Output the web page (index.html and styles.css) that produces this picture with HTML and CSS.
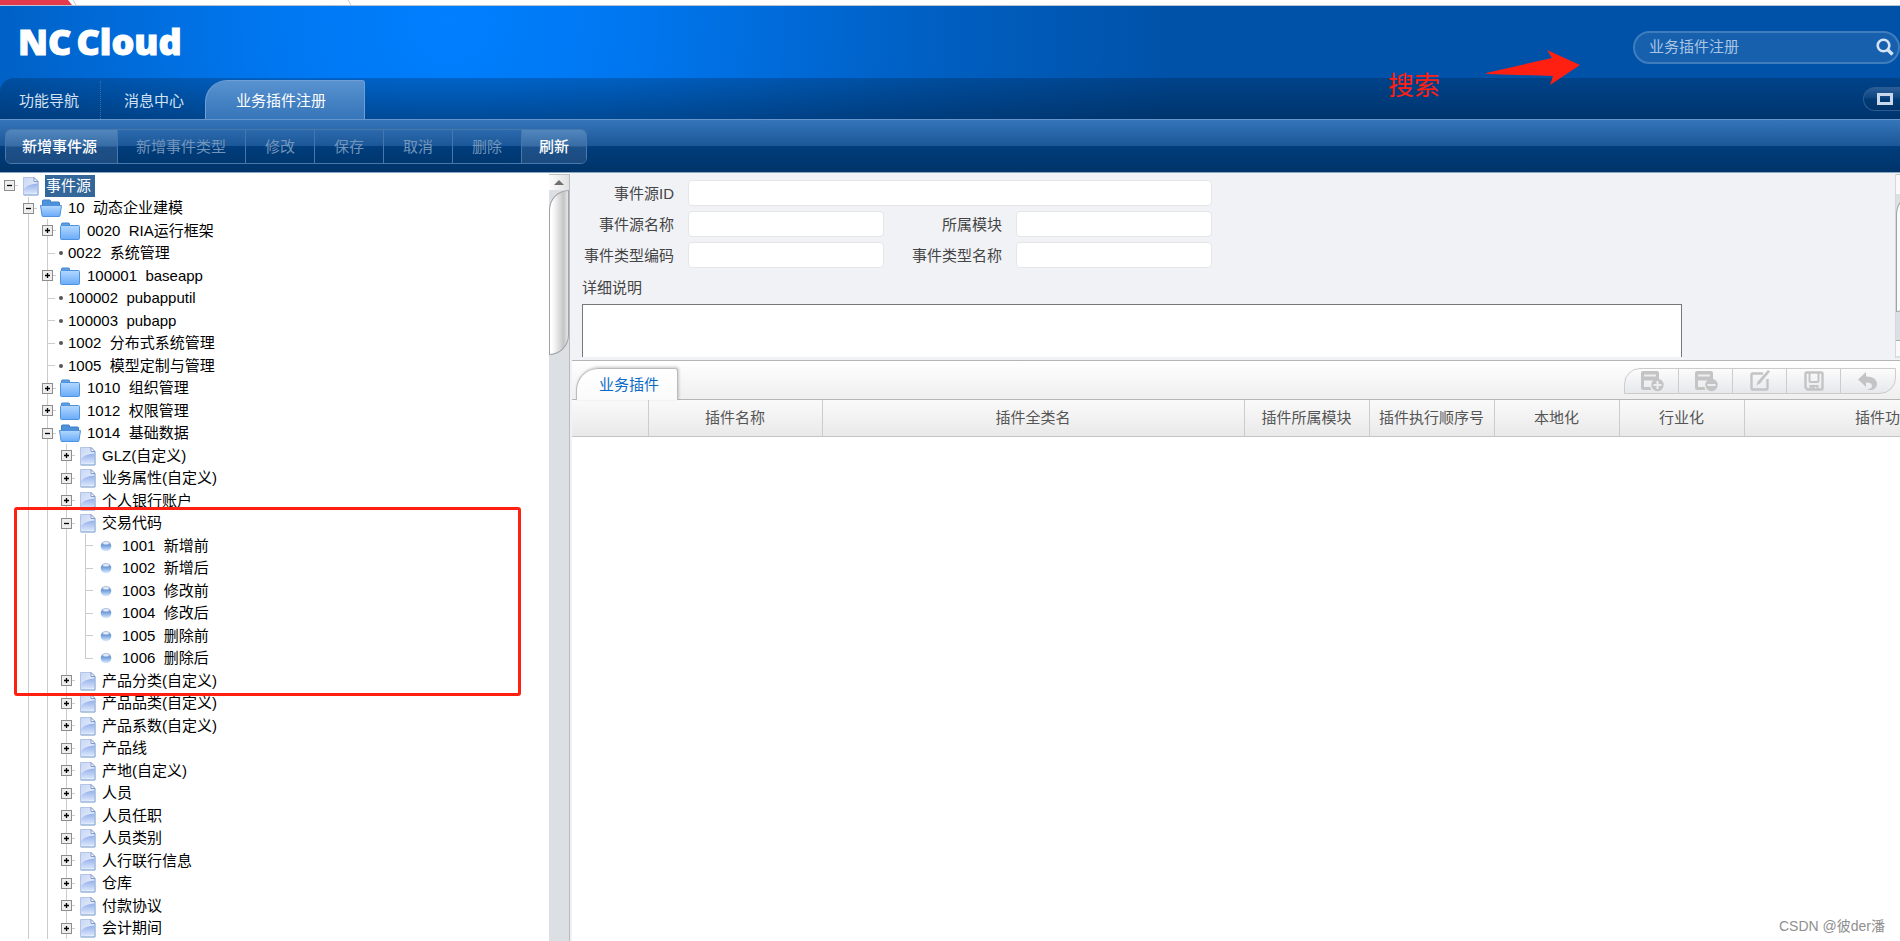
FILE: index.html
```html
<!DOCTYPE html>
<html lang="zh-CN">
<head>
    <meta charset="UTF-8">
    <meta name="viewport" content="width=device-width, initial-scale=1.0">
    <title>NC Cloud</title>
    <link rel="stylesheet" href="styles.css">
</head>
<body>
    <!-- icons -->
    <svg class="defs" aria-hidden="true">
        <defs>
            <linearGradient id="gFolder" x1="0" y1="0" x2="0" y2="1">
                <stop offset="0" stop-color="#b4d8ff"/>
                <stop offset="1" stop-color="#69abf8"/>
            </linearGradient>
            <linearGradient id="gPage" x1="0" y1="0" x2="1" y2="1">
                <stop offset="0" stop-color="#c9d7f5"/>
                <stop offset="1" stop-color="#eef3fd"/>
            </linearGradient>
            <linearGradient id="gWave" x1="0" y1="0" x2="0" y2="1">
                <stop offset="0" stop-color="#94b0ec"/>
                <stop offset="1" stop-color="#dce7fb"/>
            </linearGradient>
            <linearGradient id="gBall" x1="0" y1="0" x2="0" y2="1">
                <stop offset="0" stop-color="#c3d2e8"/>
                <stop offset=".4" stop-color="#6f98d4"/>
                <stop offset=".6" stop-color="#8db5e8"/>
                <stop offset="1" stop-color="#e0eefd"/>
            </linearGradient>
        </defs>
        <symbol id="plus" viewBox="0 0 19 19">
            <path d="M15 9.5h3" stroke="#ccc"/>
            <rect x="4.5" y="4.5" width="10" height="10" fill="#eee" stroke="#8c8c8c"/>
            <path d="M7 9.5h5M9.5 7v5" stroke="#000" stroke-width="1.3"/>
        </symbol>
        <symbol id="minus" viewBox="0 0 19 19">
            <path d="M15 9.5h3" stroke="#ccc"/>
            <rect x="4.5" y="4.5" width="10" height="10" fill="#eee" stroke="#8c8c8c"/>
            <path d="M7 9.5h5" stroke="#000" stroke-width="1.3"/>
        </symbol>
        <symbol id="page" viewBox="0 0 16 20">
            <path d="M.5 1.5H11l4 4V19H.5z" fill="url(#gPage)" stroke="#b3c4e6"/>
            <path d="M1 13c3-4 8-5 13.500-5.500V17L1 18z" fill="url(#gWave)"/>
            <path d="M11 1.500v4h4z" fill="#fff" stroke="#7f9cc8"/>
            <path d="M15 6v13H1" fill="none" stroke="#8fb0d4"/>
        </symbol>
        <symbol id="folder" viewBox="0 0 20 18">
            <path d="M1.500 4V2q0-1 1-1h6q1 0 1 1v2z" fill="#5e9fe6" stroke="#4384cd"/>
            <rect x=".5" y="3.500" width="19" height="14" rx="1" fill="url(#gFolder)" stroke="#4f93de"/>
        </symbol>
        <symbol id="folder-open" viewBox="0 0 22 18">
            <path d="M2.500 15V2q0-1 1-1h6q1 0 1 1v1h8q1 0 1 1v10z" fill="#4f92dc" stroke="#3d7ec6"/>
            <path d="M.5 6.500h21l-1.500 10q0 1-1 1h-16q-1 0-1-1z" fill="url(#gFolder)" stroke="#4f93de"/>
        </symbol>
        <symbol id="ball" viewBox="0 0 12 12">
            <circle cx="6" cy="6" r="5.300" fill="url(#gBall)"/>
            <ellipse cx="6" cy="3.200" rx="3" ry="1.300" fill="#e3ebf6"/>
        </symbol>
        <symbol id="list" viewBox="0 0 24 22">
            <path d="M3 1h14q2 0 2 2v7H1V3q0-2 2-2z"/>
            <path d="M1 9h18v2a7 7 0 0 0-3-.5H4v6.500h6.500q0 1.500 1 3H3q-2 0-2-2z"/>
            <path d="M4 4.500h12v2H4z" fill="#eceef1"/>
            <circle cx="17.500" cy="15" r="6.200"/>
        </symbol>
    </svg>

    <div class="browser-strip">
        <svg width="360" height="6" viewBox="0 0 360 6" aria-hidden="true">
            <path d="M0 0h68l4 5H0z" fill="#e5394c"/>
            <path d="M73 0l3 5M348 0l3 5" stroke="#ccc" fill="none"/>
        </svg>
    </div>

    <header class="top">
        <div class="brand-row">
            <h1 class="logo">NC<span>Cloud</span></h1>
            <form class="search">
                <input type="text" value="业务插件注册" aria-label="搜索">
                <button type="button" aria-label="搜索">
                    <svg width="18" height="18" viewBox="0 0 18 18">
                        <circle cx="7.500" cy="7.500" r="5.800" fill="none" stroke="#d5e4f4" stroke-width="2.600"/>
                        <path d="M11.500 11.500l5 5" stroke="#d5e4f4" stroke-width="3.400"/>
                    </svg>
                </button>
            </form>
        </div>
        <nav class="tabs">
            <a href="#">功能导航</a>
            <a href="#">消息中心</a>
            <a href="#" class="active">业务插件注册</a>
            <button type="button" class="restore" aria-label="还原">
                <svg width="16" height="12" viewBox="0 0 16 12"><rect x="1.500" y="1.500" width="13" height="9" fill="none" stroke="#c9d8ea" stroke-width="3"/></svg>
            </button>
        </nav>
    </header>

    <div class="toolbar">
        <div class="btn-group">
            <button type="button" class="on">新增事件源</button>
            <button type="button" disabled>新增事件类型</button>
            <button type="button" disabled>修改</button>
            <button type="button" disabled>保存</button>
            <button type="button" disabled>取消</button>
            <button type="button" disabled>删除</button>
            <button type="button" class="on">刷新</button>
        </div>
    </div>

    <div class="content">
        <aside class="side">
            <ul class="tree">
                <li class="lv0"><svg class="exp"><use href="#minus"/></svg><svg class="page"><use href="#page"/></svg><span class="selected">事件源</span></li>
                <li class="lv1"><svg class="exp"><use href="#minus"/></svg><svg class="folder open"><use href="#folder-open"/></svg>10  动态企业建模</li>
                <li class="lv2"><svg class="exp"><use href="#plus"/></svg><svg class="folder"><use href="#folder"/></svg>0020  RIA运行框架</li>
                <li class="lv2"><i class="branch"></i><i class="dot"></i>0022  系统管理</li>
                <li class="lv2"><svg class="exp"><use href="#plus"/></svg><svg class="folder"><use href="#folder"/></svg>100001  baseapp</li>
                <li class="lv2"><i class="branch"></i><i class="dot"></i>100002  pubapputil</li>
                <li class="lv2"><i class="branch"></i><i class="dot"></i>100003  pubapp</li>
                <li class="lv2"><i class="branch"></i><i class="dot"></i>1002  分布式系统管理</li>
                <li class="lv2"><i class="branch"></i><i class="dot"></i>1005  模型定制与管理</li>
                <li class="lv2"><svg class="exp"><use href="#plus"/></svg><svg class="folder"><use href="#folder"/></svg>1010  组织管理</li>
                <li class="lv2"><svg class="exp"><use href="#plus"/></svg><svg class="folder"><use href="#folder"/></svg>1012  权限管理</li>
                <li class="lv2"><svg class="exp"><use href="#minus"/></svg><svg class="folder open"><use href="#folder-open"/></svg>1014  基础数据</li>
                <li class="lv3"><svg class="exp"><use href="#plus"/></svg><svg class="page"><use href="#page"/></svg>GLZ(自定义)</li>
                <li class="lv3"><svg class="exp"><use href="#plus"/></svg><svg class="page"><use href="#page"/></svg>业务属性(自定义)</li>
                <li class="lv3"><svg class="exp"><use href="#plus"/></svg><svg class="page"><use href="#page"/></svg>个人银行账户</li>
                <li class="lv3"><svg class="exp"><use href="#minus"/></svg><svg class="page"><use href="#page"/></svg>交易代码</li>
                <li class="lv4"><i class="branch"></i><svg class="ball"><use href="#ball"/></svg>1001  新增前</li>
                <li class="lv4"><i class="branch"></i><svg class="ball"><use href="#ball"/></svg>1002  新增后</li>
                <li class="lv4"><i class="branch"></i><svg class="ball"><use href="#ball"/></svg>1003  修改前</li>
                <li class="lv4"><i class="branch"></i><svg class="ball"><use href="#ball"/></svg>1004  修改后</li>
                <li class="lv4"><i class="branch"></i><svg class="ball"><use href="#ball"/></svg>1005  删除前</li>
                <li class="lv4"><i class="branch last"></i><svg class="ball"><use href="#ball"/></svg>1006  删除后</li>
                <li class="lv3"><svg class="exp"><use href="#plus"/></svg><svg class="page"><use href="#page"/></svg>产品分类(自定义)</li>
                <li class="lv3"><svg class="exp"><use href="#plus"/></svg><svg class="page"><use href="#page"/></svg>产品品类(自定义)</li>
                <li class="lv3"><svg class="exp"><use href="#plus"/></svg><svg class="page"><use href="#page"/></svg>产品系数(自定义)</li>
                <li class="lv3"><svg class="exp"><use href="#plus"/></svg><svg class="page"><use href="#page"/></svg>产品线</li>
                <li class="lv3"><svg class="exp"><use href="#plus"/></svg><svg class="page"><use href="#page"/></svg>产地(自定义)</li>
                <li class="lv3"><svg class="exp"><use href="#plus"/></svg><svg class="page"><use href="#page"/></svg>人员</li>
                <li class="lv3"><svg class="exp"><use href="#plus"/></svg><svg class="page"><use href="#page"/></svg>人员任职</li>
                <li class="lv3"><svg class="exp"><use href="#plus"/></svg><svg class="page"><use href="#page"/></svg>人员类别</li>
                <li class="lv3"><svg class="exp"><use href="#plus"/></svg><svg class="page"><use href="#page"/></svg>人行联行信息</li>
                <li class="lv3"><svg class="exp"><use href="#plus"/></svg><svg class="page"><use href="#page"/></svg>仓库</li>
                <li class="lv3"><svg class="exp"><use href="#plus"/></svg><svg class="page"><use href="#page"/></svg>付款协议</li>
                <li class="lv3"><svg class="exp"><use href="#plus"/></svg><svg class="page"><use href="#page"/></svg>会计期间</li>
            </ul>
            <div class="scrollbar">
                <div class="arrow"></div>
                <div class="thumb"></div>
            </div>
        </aside>

        <main class="main">
            <section class="detail">
                <form class="fields">
                    <label for="srcId">事件源ID</label>
                    <input type="text" id="srcId" class="wide">
                    <label for="srcName">事件源名称</label>
                    <input type="text" id="srcName">
                    <label for="module" class="second">所属模块</label>
                    <input type="text" id="module">
                    <label for="typeCode">事件类型编码</label>
                    <input type="text" id="typeCode">
                    <label for="typeName" class="second">事件类型名称</label>
                    <input type="text" id="typeName">
                    <label for="memo" class="memo-label">详细说明</label>
                    <textarea id="memo"></textarea>
                </form>
                <div class="scrollbar">
                    <div class="arrow"></div>
                    <div class="thumb"></div>
                    <div class="end"></div>
                </div>
            </section>

            <section class="plugins">
                <div class="plugin-bar">
                    <a href="#" class="plugin-tab">业务插件</a>
                    <div class="icon-group">
                        <button type="button" aria-label="增行">
                            <svg width="24" height="22" viewBox="0 0 24 22"><use href="#list"/><path d="M13.500 15h8M17.500 11v8" stroke="#eceef1" stroke-width="2"/></svg>
                        </button>
                        <button type="button" aria-label="删行">
                            <svg width="24" height="22" viewBox="0 0 24 22"><use href="#list"/><path d="M13.500 15h8" stroke="#eceef1" stroke-width="2"/></svg>
                        </button>
                        <button type="button" aria-label="修改">
                            <svg width="22" height="22" viewBox="0 0 22 22"><path d="M14 3.500H3.500q-1 0-1 1v14q0 1 1 1h14q1 0 1-1V9" fill="none" stroke="#c4c4c4" stroke-width="2.400"/><path d="M19 0l2 1.500L11 13.500l-3.500 2 1.200-4z"/></svg>
                        </button>
                        <button type="button" aria-label="保存">
                            <svg width="20" height="20" viewBox="0 0 20 20"><path d="M1.500 2.500q0-1 1-1h15q1 0 1 1v15q0 1-1 1h-14l-2-2z" fill="none" stroke="#c4c4c4" stroke-width="2.400"/><path d="M5.500 2v8q0 1 1 1h7q1 0 1-1V2M6.500 18v-3h7v3" fill="none" stroke="#c4c4c4" stroke-width="2"/><path d="M8 15.500h2.500V18H8z"/></svg>
                        </button>
                        <button type="button" aria-label="撤销">
                            <svg width="20" height="18" viewBox="0 0 20 18"><path d="M0 7.500L8 0v4.500c7 0 11 3 11 7.500 0 3-2 5-5 6-2 .3-4 0-5-.5 4-.5 5-2 5-3.500 0-2.500-2-3.500-6-3.500V15z"/></svg>
                        </button>
                    </div>
                </div>
                <table class="grid">
                    <colgroup>
                        <col class="c-no"><col class="c-name"><col class="c-class">
                        <col class="c-mid"><col class="c-mid"><col class="c-mid"><col class="c-mid"><col>
                    </colgroup>
                    <thead>
                        <tr>
                            <th></th>
                            <th>插件名称</th>
                            <th>插件全类名</th>
                            <th>插件所属模块</th>
                            <th>插件执行顺序号</th>
                            <th>本地化</th>
                            <th>行业化</th>
                            <th class="end">插件功</th>
                        </tr>
                    </thead>
                </table>
            </section>
        </main>
    </div>

    <!-- notes drawn over the page -->
    <div class="mark-box"></div>
    <div class="mark-text">搜索</div>
    <svg class="mark-arrow" width="96" height="36" viewBox="0 0 96 36" aria-hidden="true">
        <path d="M0 23L66 8 61 0 94 15 64 35 67 26 1 24z" fill="#ff2012"/>
    </svg>
    <div class="watermark">CSDN @彼der潘</div>
</body>
</html>
```

FILE: styles.css
```css
* {
    margin: 0;
    padding: 0;
    box-sizing: border-box;
}

body {
    position: relative;
    display: flex;
    flex-direction: column;
    height: 100vh;
    overflow: hidden;
    background: #fff;
    font-family: "Liberation Sans", "Noto Sans CJK SC", sans-serif;
    font-size: 15px;
    line-height: 22px;
    color: #000;
}

a {
    color: inherit;
    text-decoration: none;
}

button, input, textarea {
    font: inherit;
    color: inherit;
    border: 0;
    background: none;
    outline: none;
}

ul {
    list-style: none;
}

.defs {
    position: absolute;
    width: 0;
    height: 0;
}

/* header */
.browser-strip {
    flex: none;
    height: 6px;
    border-bottom: 1px solid #b9c4d2;
}

.browser-strip svg {
    display: block;
}

.top {
    flex: none;
    background: radial-gradient(circle 720px at 450px 14px, #007fff 0, #0077f0 25%, #0060c4 65%, #0052a8 100%);
}

.brand-row {
    display: flex;
    justify-content: space-between;
    align-items: center;
    height: 72px;
    padding-left: 18px;
}

.logo {
    display: flex;
    gap: 5px;
    padding-bottom: 1px;
    font-family: "Open Sans", "Noto Sans", sans-serif;
    font-size: 36px;
    line-height: 40px;
    font-weight: 800;
    color: #fff;
    -webkit-text-stroke: 1px #fff;
}

.search {
    display: flex;
    align-items: center;
    justify-content: space-between;
    width: 267px;
    height: 33px;
    margin-top: 10px;
    padding: 0 4px 0 14px;
    border: 2px solid #3f7dbe;
    border-radius: 17px;
    background: #1660ae;
}

.search input {
    width: 200px;
    color: #a9c5e4;
}

.search button {
    display: flex;
}

.tabs {
    display: flex;
    align-items: flex-end;
    height: 41px;
    border-radius: 14px 0 0 0;
    background: linear-gradient(rgba(0, 18, 40, .24), rgba(0, 18, 40, .46));
    color: #d3e2f2;
}

.tabs a {
    height: 38px;
    padding: 0 21px;
    line-height: 40px;
}

.tabs a:first-child {
    padding-left: 19px;
    border-right: 1px dotted #3b6ea6;
}

.tabs a:nth-child(2) {
    padding-left: 23px;
}

.tabs a.active {
    height: 39px;
    padding: 0 38px 0 30px;
    border: 1px solid #6d9ed6;
    border-bottom: 0;
    border-radius: 22px 3px 0 0;
    background: linear-gradient(#5892d0, #3575b9);
    color: #fff;
}

.restore {
    display: flex;
    align-items: center;
    align-self: center;
    width: 37px;
    height: 24px;
    margin-left: auto;
    padding-left: 13px;
    border: 1px solid #2b5c93;
    border-right: 0;
    border-radius: 12px 0 0 12px;
    background: linear-gradient(#2a5d97, #0d4580 45%, #003a73 50%, #003468);
}

.toolbar {
    flex: none;
    height: 54px;
    padding: 9px 5px;
    border-top: 1px solid #6496cd;
    border-bottom: 1px solid #8ba6c2;
    background: linear-gradient(#3575ba, #1b5798 50%, #003d7c 51%, #003469);
}

.btn-group {
    display: inline-flex;
    height: 35px;
    border: 1px solid #4a78ab;
    border-radius: 6px;
    overflow: hidden;
}

.btn-group button {
    padding: 0 19px;
    border-right: 1px solid #4577ad;
    color: #7295bb;
}

.btn-group button:first-child {
    padding: 0 20px 0 16px;
}

.btn-group button:nth-child(2) {
    padding: 0 19px 0 18px;
}

.btn-group button:last-child {
    padding: 0 17px;
    border-right: 0;
}

.btn-group .on {
    background: linear-gradient(#5186bf, #386ca5 48%, #1d5089 52%, #1b4b80);
    color: #fff;
    font-weight: 500;
}

/* left tree */
.content {
    flex: 1;
    display: flex;
    min-height: 0;
}

.side {
    flex: none;
    display: flex;
    width: 572px;
    padding-top: 1px;
    border-right: 2px solid #f1f2f6;
    overflow: hidden;
}

.tree {
    flex: 1;
}

.tree li {
    display: flex;
    align-items: center;
    height: 22px;
    white-space: pre;
    --line: linear-gradient(#ccc, #ccc);
    background-repeat: no-repeat;
    background-size: 1px 100%;
}

.tree li:nth-child(odd) {
    height: 23px;
}

.tree .lv1 {
    padding-left: 19px;
    background-image: var(--line);
    background-position: 28px 0;
}

.tree .lv2 {
    padding-left: 38px;
    background-image: var(--line), var(--line);
    background-position: 28px 0, 47px 0;
}

.tree .lv3 {
    padding-left: 57px;
    background-image: var(--line), var(--line), var(--line);
    background-position: 28px 0, 47px 0, 66px 0;
}

.tree .lv4 {
    padding-left: 76px;
    background-image: var(--line), var(--line), var(--line);
    background-position: 28px 0, 47px 0, 66px 0;
}

.exp {
    flex: none;
    width: 19px;
    height: 19px;
}

.page {
    width: 16px;
    height: 20px;
    margin: 0 6px 0 4px;
}

.folder {
    width: 20px;
    height: 18px;
    margin: 0 7px 0 3px;
}

.folder.open {
    width: 22px;
    margin: 0 6px 0 2px;
}

.ball {
    width: 12px;
    height: 12px;
    margin: 0 10px 0 5px;
}

.selected {
    height: 22px;
    padding: 0 4px 0 1px;
    background: #336699;
    color: #fff;
}

.branch {
    align-self: stretch;
    width: 19px;
    background: linear-gradient(#ccc, #ccc) 9px 11px / 8px 1px no-repeat;
}

.lv4 .branch {
    background: linear-gradient(#ccc, #ccc) 9px 11px / 8px 1px no-repeat, linear-gradient(#ccc, #ccc) 9px 0 / 1px 100% no-repeat;
}

.lv4 .branch.last {
    background-size: 8px 1px, 1px 11px;
}

.dot {
    width: 4px;
    height: 4px;
    margin: 0 5px 0 2px;
    border-radius: 2px;
    background: #555;
}

.scrollbar {
    flex: none;
    width: 21px;
    border-right: 1px solid #b9bbbe;
    background: #dcdfe4;
}

.scrollbar .arrow {
    display: flex;
    justify-content: center;
    align-items: center;
    height: 16px;
    border-top: 1px solid #c3c3c3;
    background: linear-gradient(90deg, #fdfdfd, #e1e1e1);
}

.scrollbar .arrow::before {
    content: "";
    border: 5px solid transparent;
    border-top: 0;
    border-bottom: 5px solid #707070;
}

.scrollbar .thumb {
    height: 165px;
    border: 1px solid #a0a2a6;
    border-radius: 20px 0 20px 0;
    background: linear-gradient(90deg, #fff 10%, #f0f0f0 30%, #c4c5c7 75%, #e6e6e6);
}

/* right side */
.main {
    flex: 1;
    display: flex;
    flex-direction: column;
    min-width: 0;
}

.detail {
    flex: none;
    display: flex;
    height: 188px;
    background: #f1f2f6;
    border-bottom: 1px solid #b5b5b5;
    overflow: hidden;
}

.fields {
    flex: 1;
    display: grid;
    grid-template-columns: 92px 196px 104px 196px 1fr;
    grid-template-rows: 26px 26px 26px 26px 62px;
    column-gap: 14px;
    row-gap: 5px;
    margin: 0 213px 3px 0;
    padding: 7px 0 0 10px;
    align-items: center;
    overflow: hidden;
    color: #444;
}

.fields label {
    grid-column: 1;
    padding-top: 2px;
    text-align: right;
}

.fields label.second {
    grid-column: 3;
}

.fields label.memo-label {
    padding-top: 4px;
    text-align: left;
}

.fields input {
    width: 100%;
    height: 26px;
    padding: 0 6px;
    border: 1px solid #e6e6e8;
    border-radius: 4px;
    background: #fff;
}

.fields input.wide {
    grid-column: 2 / 5;
}

.fields textarea {
    grid-column: 1 / 6;
    width: 100%;
    height: 62px;
    padding: 4px;
    border: 1px solid #777;
    background: #fff;
    resize: none;
}

.detail .scrollbar {
    width: 5px;
    margin: 1px 0 2px;
    border: 0;
    border-left: 1px solid #d5d7da;
    overflow: hidden;
}

.detail .scrollbar .arrow {
    height: 20px;
    background: #fafafa;
}

.detail .scrollbar .arrow::before {
    display: none;
}

.detail .scrollbar .thumb {
    width: 20px;
    height: 118px;
    background: #fafafa;
}

.detail .scrollbar .end {
    height: 16px;
    margin-top: 28px;
    border-top: 1px solid #aaa;
    background: #fafafa;
}

.plugins {
    flex: 1;
    min-height: 0;
}

.plugin-bar {
    display: flex;
    justify-content: space-between;
    height: 39px;
    padding: 7px 4px 0;
    border-bottom: 1px solid #b5b5b5;
    background: linear-gradient(#fff, #efefef);
}

.plugin-tab {
    height: 32px;
    padding: 0 18px 0 22px;
    line-height: 32px;
    border: 1px solid #bbb;
    border-bottom: 0;
    border-radius: 22px 3px 0 0;
    box-shadow: 1px -1px 3px rgba(0, 0, 0, .2);
    background: linear-gradient(#fff, #fafafa);
    color: #0a6bc7;
}

.icon-group {
    display: flex;
    height: 26px;
    border: 1px solid #ccc;
    border-radius: 16px 0 16px 0;
    overflow: hidden;
    background: linear-gradient(#fcfcfc, #e6e8ec);
}

.icon-group button {
    display: flex;
    justify-content: center;
    align-items: center;
    width: 54px;
    border-right: 1px solid #ccc;
}

.icon-group button:last-child {
    border-right: 0;
}

.icon-group svg {
    fill: #c4c4c4;
}

.grid {
    width: 100%;
    table-layout: fixed;
    border-collapse: collapse;
}

.grid th {
    height: 36px;
    border-right: 1px solid #ccc;
    border-bottom: 1px solid #c4c4c4;
    background: linear-gradient(#fafafa, #e9e9e9);
    font-weight: normal;
    color: #555;
    white-space: nowrap;
}

.grid th.end {
    border-right: 0;
    text-align: right;
}

.c-no {
    width: 76px;
}

.c-name {
    width: 174px;
}

.c-class {
    width: 422px;
}

.c-mid {
    width: 125px;
}

/* notes */
.mark-box {
    position: absolute;
    left: 14px;
    top: 507px;
    width: 507px;
    height: 189px;
    border: 3px solid #ff2012;
    border-radius: 3px;
}

.mark-text {
    position: absolute;
    right: 460px;
    top: 69px;
    font-size: 26px;
    line-height: 34px;
    color: #ff2012;
}

.mark-arrow {
    position: absolute;
    right: 318px;
    top: 50px;
}

.watermark {
    position: absolute;
    right: 15px;
    bottom: 4px;
    font-size: 14px;
    color: #8f8f8f;
}
```
